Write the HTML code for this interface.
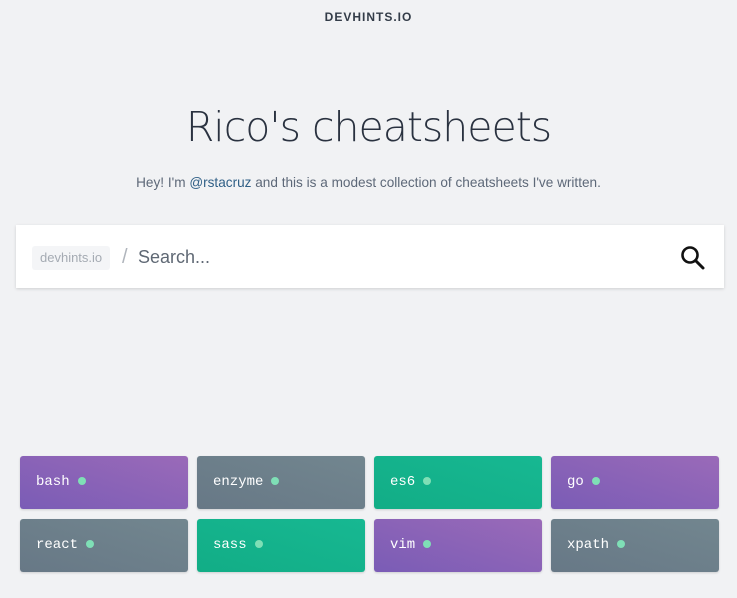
<!DOCTYPE html><html><head><style>
body{margin:0;width:737px;height:598px;background:#f1f2f4;font-family:"Liberation Sans",sans-serif;position:relative;overflow:hidden}
.top{position:absolute;top:10px;left:0;right:0;text-align:center;font-size:12px;font-weight:bold;letter-spacing:1px;color:#333c48}
h1{position:absolute;top:103px;left:0;right:0;margin:0;text-align:center;font-weight:200;font-family:"DejaVu Sans ExtraLight","DejaVu Sans","Liberation Sans",sans-serif;font-size:41px;letter-spacing:-1px;color:#2a3240}
.sub{position:absolute;top:175px;left:0;right:0;text-align:center;font-size:13.6px;color:#5d6878}
.sub a{color:#2f5f86}
.search{position:absolute;left:16px;top:225px;width:708px;height:63px;background:#fff;box-shadow:0 1px 3px rgba(0,0,0,.15)}
.tag{position:absolute;left:16px;top:21px;height:24px;line-height:24px;padding:0 8px;background:#f4f5f7;border-radius:3px;color:#a5abb3;font-size:13px}
.slash{position:absolute;left:106px;top:21px;font-size:20px;color:#b0b5bc}
.ph{position:absolute;left:122px;top:22px;font-size:18px;color:#5f6874}
.tile{position:absolute;width:168px;height:53px;border-radius:3px;box-shadow:0 1px 2px rgba(0,0,0,.15);color:#fff;font-family:"Liberation Mono",monospace;font-size:14px;line-height:53px;padding-left:16px;box-sizing:border-box}
.tile:after{content:"";display:inline-block;width:8px;height:8px;border-radius:50%;background:#7fdfb6;margin-left:8px;vertical-align:0}
.p{background:linear-gradient(to top right,#7a5cb6,#9a6ab8)}
.g{background:linear-gradient(to top right,#677886,#72868f)}
.t{background:linear-gradient(to top right,#12ad86,#17b892)}
</style></head><body>
<div class="top">DEVHINTS.IO</div>
<h1>Rico's cheatsheets</h1>
<div class="sub">Hey! I'm <a>@rstacruz</a> and this is a modest collection of cheatsheets I've written.</div>
<div class="search"><span class="tag">devhints.io</span><span class="slash">/</span><span class="ph">Search...</span>
<svg style="position:absolute;left:664px;top:20px" width="26" height="26" viewBox="0 0 26 26"><circle cx="10" cy="10" r="7.5" fill="none" stroke="#111" stroke-width="2.6"/><line x1="15.5" y1="15.5" x2="23" y2="23" stroke="#111" stroke-width="3" stroke-linecap="round"/></svg></div>
<div class="tile p" style="left:20px;top:456px">bash</div>
<div class="tile g" style="left:197px;top:456px">enzyme</div>
<div class="tile t" style="left:374px;top:456px">es6</div>
<div class="tile p" style="left:551px;top:456px">go</div>
<div class="tile g" style="left:20px;top:519px">react</div>
<div class="tile t" style="left:197px;top:519px">sass</div>
<div class="tile p" style="left:374px;top:519px">vim</div>
<div class="tile g" style="left:551px;top:519px">xpath</div>
</body></html>
